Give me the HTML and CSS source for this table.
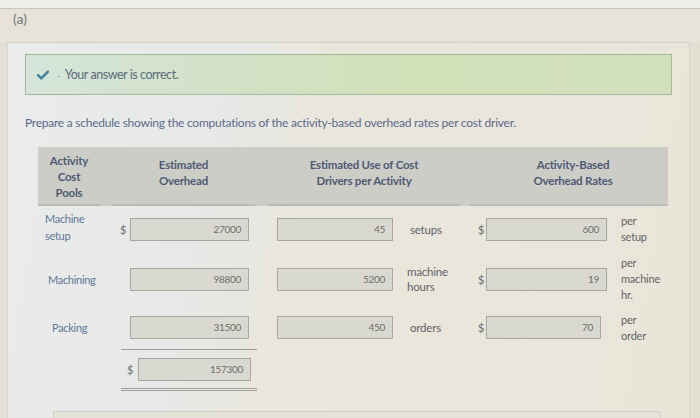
FILE: index.html
```html
<!DOCTYPE html>
<html>
<head>
<meta charset="utf-8">
<link rel="stylesheet" href="styles.css">
</head>
<body>
<div class="topbar"></div>
<div class="part-label">(a)</div>
<div class="card">
  <div class="notice">
    <svg class="check" viewBox="0 0 12 10" width="12" height="10"><path d="M1 5.2 L4.3 8.4 L11 1.6" fill="none" stroke="#3f7fa0" stroke-width="2.4" stroke-linecap="round" stroke-linejoin="round"/></svg>
    <span class="dash">-</span>
    <span class="notice-text">Your answer is correct.</span>
  </div>
  <p class="prompt">Prepare a schedule showing the computations of the activity-based overhead rates per cost driver.</p>

  <div class="table">
    <div class="head">
      <div class="hcell h1">Activity<br>Cost<br>Pools</div>
      <div class="hcell h2">Estimated<br>Overhead</div>
      <div class="hcell h3">Estimated Use of Cost<br>Drivers per Activity</div>
      <div class="hcell h4">Activity-Based<br>Overhead Rates</div>
    </div>

    <div class="row r1">
      <div class="label">Machine<br>setup</div>
      <div class="cur">$</div>
      <div class="box b1">27000</div>
      <div></div>
      <div class="box b2">45</div>
      <div class="unit">setups</div>
      <div class="cur">$</div>
      <div class="box b3">600</div>
      <div class="per">per<br>setup</div>
    </div>

    <div class="row r2">
      <div class="label">Machining</div>
      <div class="cur"></div>
      <div class="box b1">98800</div>
      <div></div>
      <div class="box b2">5200</div>
      <div class="unit">machine<br>hours</div>
      <div class="cur">$</div>
      <div class="box b3">19</div>
      <div class="per">per<br>machine<br>hr.</div>
    </div>

    <div class="row r3">
      <div class="label">Packing</div>
      <div class="cur"></div>
      <div class="box b1">31500</div>
      <div></div>
      <div class="box b2">450</div>
      <div class="unit">orders</div>
      <div class="cur">$</div>
      <div class="box b3">70</div>
      <div class="per">per<br>order</div>
    </div>

    <div class="total">
      <div class="cur">$</div>
      <div class="box bt">157300</div>
    </div>
  </div>

  <div class="next-card"></div>
</div>
</body>
</html>
```

FILE: styles.css
```css
html, body {
  margin: 0;
  padding: 0;
}
body {
  width: 700px;
  height: 418px;
  overflow: hidden;
  background: #e3dfd3;
  font-family: Lato, "Open Sans", sans-serif;
}
.topbar {
  height: 8px;
  background: #efeee9;
  border-bottom: 1px solid #c6c3b9;
}
.part-label {
  height: 33px;
  padding-left: 13px;
  font-size: 14px;
  line-height: 20px;
  color: #707582;
  background: #e7e3d8;
}
.card {
  margin: 0 10px 0 7px;
  height: 376px;
  border-top: 1px solid #d3d0c6;
  border-left: 1px solid #d8d6d0;
  border-right: 1px solid #d6d3ca;
  background: linear-gradient(100deg, #eaeceb 0%, #e6e9e8 28%, #e9e6dc 44%, #e9e5d9 100%);
  overflow: hidden;
}
.notice {
  margin: 11px 17px 0 17px;
  height: 39px;
  border: 1px solid #a6b89c;
  background: linear-gradient(90deg, #d5e5da 0%, #d2e2c8 30%, #d2e1b8 60%, #d3e0be 100%);
  display: flex;
  align-items: center;
}
.check {
  margin-left: 11px;
  margin-top: 1px;
}
.dash {
  margin-left: 8px;
  font-size: 10px;
  color: #8a96a0;
}
.notice-text {
  margin-left: 4px;
  font-size: 12.5px;
  color: #5b6a7a;
  letter-spacing: -0.45px;
}
.prompt {
  margin: 20px 0 0 17px;
  font-size: 12px;
  line-height: 15px;
  color: #5d6a8b;
  letter-spacing: -0.25px;
}
.table {
  margin: 17px 0 0 30px;
  width: 630px;
}
.head {
  display: grid;
  grid-template-columns: 74px 156px 202px 198px;
  height: 59px;
  background: #cdcdc7;
}
.hcell {
  display: flex;
  align-items: center;
  justify-content: center;
  text-align: center;
  font-size: 11.5px;
  font-weight: 700;
  line-height: 16px;
  color: #4e5a73;
  border-bottom: 2px solid #bbbab4;
  letter-spacing: -0.2px;
}
.h1 { margin-right: 12px; padding-top: 2px; }
.h2 { margin-right: 13px; padding-bottom: 6px; }
.h3 { margin-right: 10px; padding-bottom: 6px; }
.h4 { padding-bottom: 6px; padding-left: 8px; }
.row {
  display: grid;
  grid-template-columns: 74px 18px 119px 28px 116px 77px 16px 121px 61px;
  align-items: center;
}
.r1 { height: 46px; }
.r2 { height: 54px; }
.r3 { height: 43px; }
.label {
  font-size: 11px;
  line-height: 17px;
  color: #5f7599;
  padding-left: 7px;
  letter-spacing: -0.3px;
}
.r1 .label { margin-top: -4px; }
.r2 .label { padding-left: 10px; }
.r3 .label { padding-left: 14px; }
.cur {
  font-size: 11px;
  color: #6a6d70;
  padding-left: 8px;
}
.box {
  height: 21px;
  border: 1px solid #a9a8a0;
  background: #dad9d1;
  font-size: 10px;
  line-height: 21px;
  text-align: right;
  padding-right: 7px;
  color: #6e6e6a;
  letter-spacing: -0.3px;
}
.unit {
  font-size: 11.5px;
  line-height: 15px;
  color: #626366;
  padding-left: 17px;
  letter-spacing: -0.2px;
}
.r2 .unit { padding-left: 14px; }
.per {
  font-size: 11px;
  line-height: 16px;
  color: #626366;
  padding-left: 14px;
  letter-spacing: -0.2px;
}
.r3 .box.b3 { margin-right: 6px; }
.total {
  display: grid;
  grid-template-columns: 17px 113px;
  align-items: center;
  width: 136px;
  margin-left: 83px;
  padding: 8px 0 7px;
  border-top: 1px solid #9e9d96;
  border-bottom: 3px double #9e9d96;
}
.total .cur { padding-left: 6px; }
.next-card {
  margin: 20px 28px 0 45px;
  height: 20px;
  border: 1px solid #d2cfc5;
  background: #e5e2d8;
}
```
